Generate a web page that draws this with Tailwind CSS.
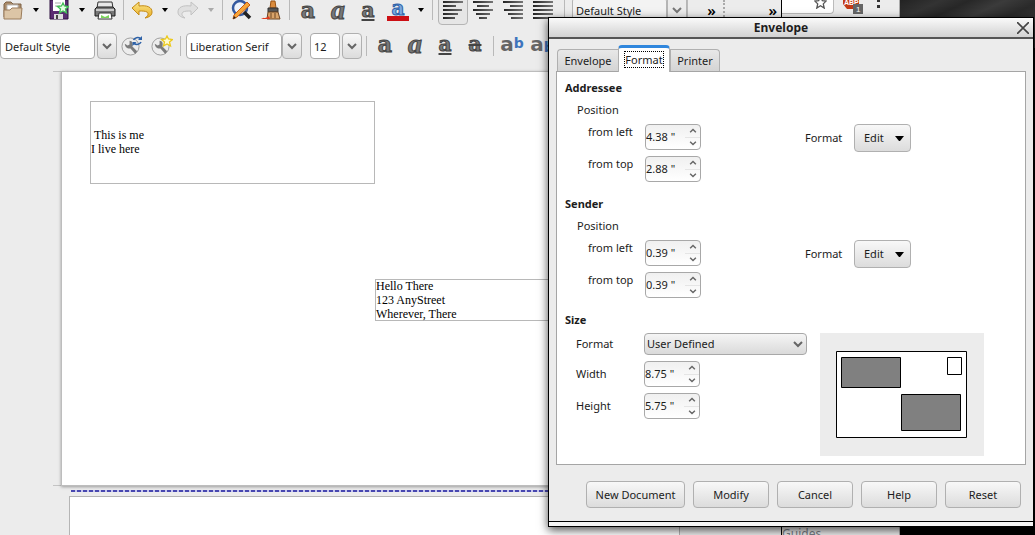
<!DOCTYPE html>
<html lang="en">
<head>
  <meta charset="UTF-8">
  <meta name="viewport" content="width=device-width, initial-scale=1">
  <title>Envelope</title>
  <script src="https://cdn.jsdelivr.net/npm/@tailwindcss/browser@4"></script>
</head>
<body class="relative h-screen overflow-hidden bg-black font-['Noto_Sans',sans-serif] text-[11px] leading-4 text-[#1c1c1c]">
  <!-- Shared symbols -->
  <svg class="absolute h-0 w-0">
    <defs>
      <linearGradient id="bar" x1="0" y1="0" x2="1" y2="0"><stop offset="0" stop-color="#222"/><stop offset="1" stop-color="#777"/></linearGradient>
      <linearGradient id="gold" x1="0" y1="0" x2="0" y2="1"><stop offset="0" stop-color="#fbe88a"/><stop offset="1" stop-color="#e9ac25"/></linearGradient>
    </defs>
    <symbol id="down" viewBox="0 0 6 4"><path d="M0 0h6L3 4z" fill="currentColor"/></symbol>
    <symbol id="chev" viewBox="0 0 10 7"><path d="M1 1l4 4 4-4" fill="none" stroke="currentColor" stroke-width="2"/></symbol>
    <symbol id="wrench" viewBox="0 0 20 20">
      <circle cx="10" cy="10" r="9" fill="#ededed" stroke="#9b9b9b"/>
      <path d="M4 7l3 2 2-1 0-4c3 0 4 3 3 6l5 5-2 3-5-6c-3 1-6-2-6-5z" fill="#7c7c7c"/>
    </symbol>
  </svg>

  <!-- Desktop wallpaper -->
  <div class="absolute top-0 right-0 h-12 w-[136px] bg-[linear-gradient(155deg,#222_0%,#333_18%,#272727_30%,#3b3b3b_45%,#2a2a2a_60%,#353535_75%,#242424_100%)]"></div>

  <!-- Writer window -->
  <main class="absolute inset-y-0 left-0 flex w-[782px] flex-col overflow-hidden border-r border-black bg-[#ececec]">
    <div class="-ml-0.5 flex h-5 shrink-0 items-center">
      <button class="flex w-[30px] shrink-0 justify-center" aria-label="Open">
        <svg class="h-[22px] w-[20px]" viewBox="0 0 20 22"><path d="M1 18V5l2-2h5l2 2h8v6" fill="#a98b6b" stroke="#7e6347"/><path d="M4 6h11v9H4z" fill="#fff" stroke="#bbb"/><path d="M1 20V11h6l2-2h10l-1 11z" fill="#dcc5a6" stroke="#9b7d5c"/></svg>
      </button>
      <span class="flex w-4 shrink-0 justify-center text-black"><svg class="h-1 w-1.5"><use href="#down"/></svg></span>
      <button class="flex w-[30px] shrink-0 justify-center" aria-label="Save">
        <svg class="h-[22px] w-[20px]" viewBox="0 0 20 22"><path d="M1 1h18v19H1z" fill="#5b2d72" stroke="#2e1340"/><path d="M4 1h12v11H4z" fill="#fff"/><path d="M6 4h6M6 7h5" stroke="#aaa"/><path d="M5 15h9v5H5z" fill="#ddd"/><path d="M7 16h2v4H7z" fill="#444"/><path d="M14 4l1.500 3 4 .5-3 2.500 1 4-3.500-2-3.500 2 1-4-3-2.500 4-.5z" fill="#e3ffe3" stroke="#41bd55" stroke-width="1.300"/></svg>
      </button>
      <span class="flex w-4 shrink-0 justify-center text-black"><svg class="h-1 w-1.5"><use href="#down"/></svg></span>
      <button class="flex w-[30px] shrink-0 justify-center" aria-label="Print">
        <svg class="h-[22px] w-[22px]" viewBox="0 0 22 22"><path d="M4 3h14l1 6H3z" fill="#e8e8e8" stroke="#333"/><path d="M1 10l2-2h16l2 2v7H1z" fill="#777" stroke="#1c1c1c"/><path d="M2 10h18v2H2z" fill="#c9c9c9"/><path d="M5 14h12l1 6H4z" fill="#fff" stroke="#333"/><path d="M7 16l4 2 4-2v3H7z" fill="#7bd45a"/></svg>
      </button>
      <span class="flex w-[7px] shrink-0 justify-center"><i class="h-5 w-px bg-[#b9b9b9]"></i></span>
      <button class="flex w-[30px] shrink-0 justify-center" aria-label="Undo">
        <svg class="h-[18px] w-[22px]" viewBox="0 0 22 18"><path d="M1 7l7-6v4c8-1 13 1 13 6 0 3-2 5-7 6 3-2 4-4 2-6-2-1-4-1-8-1v4z" fill="url(#gold)" stroke="#c48a14"/></svg>
      </button>
      <span class="flex w-4 shrink-0 justify-center text-black"><svg class="h-1 w-1.5"><use href="#down"/></svg></span>
      <button class="flex w-[30px] shrink-0 justify-center" aria-label="Redo" disabled>
        <svg class="h-[18px] w-[22px]" viewBox="0 0 22 18"><path d="M21 7l-7-6v4C6 4 1 6 1 11c0 3 2 5 7 6-3-2-4-4-2-6 2-1 4-1 8-1v4z" fill="#e0e0e0" stroke="#c2c2c2"/></svg>
      </button>
      <span class="flex w-4 shrink-0 justify-center text-[#aaa]"><svg class="h-1 w-1.5"><use href="#down"/></svg></span>
      <span class="flex w-[7px] shrink-0 justify-center"><i class="h-5 w-px bg-[#b9b9b9]"></i></span>
      <button class="flex w-[30px] shrink-0 justify-center" aria-label="Find and replace">
        <svg class="h-[22px] w-[22px]" viewBox="0 0 22 22"><circle cx="10" cy="9" r="7" fill="#eef3fb" stroke="#34599f" stroke-width="2.5"/><path d="M14 13l6 6" stroke="#222" stroke-width="3.5"/><path d="M3 20l1-4L17 3l3 3L7 18z" fill="#f6a63a" stroke="#c75b14"/><path d="M3 20l1-3 2 2z" fill="#222"/></svg>
      </button>
      <button class="flex w-[30px] shrink-0 justify-center" aria-label="Clone formatting">
        <svg class="h-[22px] w-[22px]" viewBox="0 0 22 22"><path d="M11 2h4l1 7h-6z" fill="#d98b3d" stroke="#995313"/><path d="M8 9h10v4H8z" fill="#555" stroke="#333"/><path d="M8 13h10l2 7H7z" fill="#d9a46a" stroke="#6b4423"/><path d="M11 14v5M15 14v5" stroke="#6b4423"/><path d="M1 20c3-2 5 0 8-3l1 3z" fill="#e03a1e"/></svg>
      </button>
      <span class="flex w-[7px] shrink-0 justify-center"><i class="h-5 w-px bg-[#b9b9b9]"></i></span>
      <button class="w-[30px] shrink-0 font-['DejaVu_Serif',serif] text-[22px] leading-[18px] font-bold text-[#777] [-webkit-text-stroke:1px_#444]">a</button>
      <button class="w-[30px] shrink-0 font-['Liberation_Serif',serif] text-[28px] leading-[18px] font-bold text-[#777] italic [-webkit-text-stroke:1px_#444]">a</button>
      <button class="w-[30px] shrink-0 font-['DejaVu_Serif',serif] text-[20px] leading-[18px] font-bold text-[#777] underline decoration-[#444] decoration-2 underline-offset-2 [-webkit-text-stroke:1px_#444]">a</button>
      <button class="flex h-[22px] w-[30px] shrink-0 flex-col items-center justify-end" aria-label="Font color">
        <span class="font-['DejaVu_Serif',serif] text-[20px] leading-4 font-bold text-[#79a8e0] [-webkit-text-stroke:1px_#2e62a8]">a</span>
        <i class="h-[5px] w-[22px] bg-[#cc0f14]"></i>
      </button>
      <span class="flex w-4 shrink-0 justify-center text-black"><svg class="h-1 w-1.5"><use href="#down"/></svg></span>
      <span class="mr-0.5 flex w-[7px] shrink-0 justify-center"><i class="h-5 w-px bg-[#b9b9b9]"></i></span>
      <button class="flex h-[30px] w-[30px] shrink-0 items-center justify-center rounded border border-[#b5b5b5] bg-[#e6e6e6]" aria-label="Align left">
        <svg class="h-[18px] w-[20px]" viewBox="0 0 20 18" fill="url(#bar)"><path d="M0 0h20v2H0zM0 4h13v2H0zM0 8h19v2H0zM0 12h15v2H0zM0 16h12v2H0z"/></svg>
      </button>
      <button class="flex w-[30px] shrink-0 justify-center" aria-label="Center">
        <svg class="h-[18px] w-[20px]" viewBox="0 0 20 18" fill="url(#bar)"><path d="M0 0h20v2H0zM4 4h12v2H4zM0 8h20v2H0zM3 12h14v2H3zM6 16h8v2H6z"/></svg>
      </button>
      <button class="flex w-[30px] shrink-0 justify-center" aria-label="Align right">
        <svg class="h-[18px] w-[20px]" viewBox="0 0 20 18" fill="url(#bar)"><path d="M0 0h20v2H0zM7 4h13v2H7zM1 8h19v2H1zM5 12h15v2H5zM8 16h12v2H8z"/></svg>
      </button>
      <button class="flex w-[30px] shrink-0 justify-center" aria-label="Justify">
        <svg class="h-[18px] w-[20px]" viewBox="0 0 20 18" fill="url(#bar)"><path d="M0 0h20v2H0zM0 4h20v2H0zM0 8h20v2H0zM0 12h20v2H0zM0 16h20v2H0z"/></svg>
      </button>
      <span class="flex w-3 shrink-0 justify-center"><i class="h-5 w-px bg-[#b9b9b9]"></i></span>
      <input class="ml-0.5 h-[26px] w-[95px] shrink-0 rounded-sm border border-[#b5b5b5] bg-[#f3f3f3] px-[3px]" value="Default Style" aria-label="Paragraph style">
      <button class="flex h-[26px] w-5 shrink-0 items-center justify-center border border-[#b5b5b5] text-[#777]" aria-label="Open styles"><svg class="h-[7px] w-[10px]"><use href="#chev"/></svg></button>
      <i class="h-5 w-px shrink-0 bg-[#b9b9b9]"></i>
      <span class="flex-1 pl-3 text-center text-[15px] font-semibold text-black">»</span>
      <i class="h-5 shrink-0 border-l-2 border-dotted border-[#aaa]"></i>
      <span class="w-[56px] pr-1 text-right text-[15px] font-semibold text-black">»</span>
    </div>

    <div class="mt-[13px] flex h-[26px] shrink-0 items-center">
      <input class="mr-0.5 h-[26px] w-[95px] shrink-0 rounded-sm border border-[#aaa] bg-white px-1" value="Default Style" aria-label="Style">
      <button class="flex h-[26px] w-5 shrink-0 items-center justify-center rounded-sm border border-[#b0b0b0] bg-linear-to-b from-[#f8f8f8] to-[#dcdcdc] text-[#666]" aria-label="Open style list"><svg class="h-[7px] w-[10px]"><use href="#chev"/></svg></button>
      <button class="flex w-[30px] shrink-0 justify-center" aria-label="Update style">
        <svg class="h-[22px] w-[22px]" viewBox="0 0 22 22"><use href="#wrench" x="0" y="2" width="19" height="19"/><path d="M12.500 5a4.500 4 0 0 1 7-1.500M20 7a4.500 4 0 0 1-7 1.500" fill="none" stroke="#2e62a8" stroke-width="1.6"/><path d="M21 1v4h-4zM11.500 11V7h4z" fill="#2e62a8"/></svg>
      </button>
      <button class="flex w-[30px] shrink-0 justify-center" aria-label="New style">
        <svg class="h-[22px] w-[22px]" viewBox="0 0 22 22"><use href="#wrench" x="0" y="2" width="19" height="19"/><path d="M16 1l1.500 3 4 .5-3 2.500 1 4-3.500-2-3.500 2 1-4-3-2.500 4-.5z" fill="#fffbd0" stroke="#ecc91c" stroke-width="1.3"/></svg>
      </button>
      <span class="mr-0.5 flex w-[7px] shrink-0 justify-center"><i class="h-5 w-px bg-[#b9b9b9]"></i></span>
      <input class="h-[26px] w-[96px] shrink-0 rounded-sm border border-[#aaa] bg-white px-[3px]" value="Liberation Serif" aria-label="Font name">
      <button class="mr-2 flex h-[26px] w-5 shrink-0 items-center justify-center rounded-sm border border-[#b0b0b0] bg-linear-to-b from-[#f8f8f8] to-[#dcdcdc] text-[#666]" aria-label="Open font list"><svg class="h-[7px] w-[10px]"><use href="#chev"/></svg></button>
      <input class="mr-0.5 h-[26px] w-[30px] shrink-0 rounded-sm border border-[#aaa] bg-white px-[3px]" value="12" aria-label="Font size">
      <button class="flex h-[26px] w-5 shrink-0 items-center justify-center rounded-sm border border-[#b0b0b0] bg-linear-to-b from-[#f8f8f8] to-[#dcdcdc] text-[#666]" aria-label="Open size list"><svg class="h-[7px] w-[10px]"><use href="#chev"/></svg></button>
      <span class="flex w-2 shrink-0 justify-center"><i class="h-5 w-px bg-[#b9b9b9]"></i></span>
      <button class="w-[30px] shrink-0 pb-1 font-['DejaVu_Serif',serif] text-[22px] leading-[18px] font-bold text-[#777] [-webkit-text-stroke:1px_#444]">a</button>
      <button class="w-[30px] shrink-0 pb-1 font-['Liberation_Serif',serif] text-[28px] leading-[18px] font-bold text-[#777] italic [-webkit-text-stroke:1px_#444]">a</button>
      <button class="w-[30px] shrink-0 pb-1 font-['DejaVu_Serif',serif] text-[20px] leading-[18px] font-bold text-[#777] underline decoration-[#444] decoration-2 underline-offset-2 [-webkit-text-stroke:1px_#444]">a</button>
      <button class="w-[30px] shrink-0 pb-1 font-['DejaVu_Serif',serif] text-[20px] leading-[18px] font-bold text-[#777] line-through decoration-[#444] decoration-2 [-webkit-text-stroke:1px_#444]">a</button>
      <span class="flex w-[7px] shrink-0 justify-center"><i class="h-5 w-px bg-[#b9b9b9]"></i></span>
      <button class="flex w-[30px] shrink-0 justify-center pb-1 font-['DejaVu_Sans',sans-serif] text-[20px] leading-[18px] font-bold text-[#666]">a<sup class="top-0 self-start text-[14px] leading-4 text-[#3d74bd]">b</sup></button>
      <button class="flex w-[30px] shrink-0 justify-center pb-1 font-['DejaVu_Sans',sans-serif] text-[20px] leading-[18px] font-bold text-[#666]">a<sub class="bottom-0 self-end text-[14px] leading-3 text-[#3d74bd]">b</sub></button>
    </div>

    <!-- Document area -->
    <div class="mt-3 flex flex-1 flex-col font-['Liberation_Serif',serif] text-[12px] leading-[14px] text-black">
      <div class="flex shrink-0">
        <div class="flex w-[61px] flex-col items-end justify-between">
          <i class="h-px w-2 bg-[#c4c4c4]"></i>
          <i class="h-px w-2 bg-[#c4c4c4]"></i>
        </div>
        <section class="h-[415px] flex-1 border border-r-0 border-[#bdbdbd] bg-white pt-[29px] pl-7 shadow-[0_1px_3px_rgba(0,0,0,.35)]">
          <div class="h-[83px] w-[285px] border border-[#b8b8b8] pt-[26px]">
            <p class="pl-[3px]">This is me</p>
            <p>I live here</p>
          </div>
          <div class="mt-[95px] ml-[285px] flex h-[42px] w-[286px] flex-col justify-center border border-[#b8b8b8]">
            <p>Hello There</p>
            <p>123 AnyStreet</p>
            <p>Wherever, There</p>
          </div>
        </section>
      </div>
      <div class="mt-1 ml-[71px] h-0.5 shrink-0 bg-[repeating-linear-gradient(90deg,#4848b0_0_4px,#c6c6ee_4px_6px)]"></div>
      <div class="mt-1 ml-[69px] w-[611px] flex-1 border border-b-0 border-[#b5b5b5] bg-white"></div>
    </div>
  </main>

  <!-- Browser window behind the dialog -->
  <div class="absolute inset-y-0 left-[782px] flex w-[118px] flex-col justify-between overflow-hidden border-r border-[#aaa] bg-[#ececec]">
    <div class="flex h-[14px] items-start">
      <div class="flex h-[14px] w-[52px] justify-end rounded-br-sm border-r border-b border-[#bbb] bg-white pr-1.5">
        <svg class="-mt-1 h-[13px] w-[13px]" viewBox="0 0 14 14"><path d="M7 1l2 4 4 .5-3 3 1 4.5-4-2.500-4 2.500 1-4.500-3-3L5 5z" fill="none" stroke="#555" stroke-width="1.4"/></svg>
      </div>
      <svg class="ml-2 h-[15px] w-[21px]" viewBox="0 0 21 15"><path d="M1 0h16v4l-4 5H5L1 4z" fill="#c33a16"/><text x="2" y="5" font-size="7" font-weight="bold" fill="#fff" font-family="Liberation Sans">ABP</text><path d="M11 4h10v10H11z" fill="#666"/><text x="14" y="12" font-size="8" fill="#fff" font-family="Liberation Sans">1</text></svg>
      <svg class="ml-3.5 h-[9px] w-[3px]" viewBox="0 0 3 9"><path d="M0 0h3v2H0zM0 5h3v3H0z" fill="#333"/></svg>
    </div>
    <div class="h-[9px] text-[12px] text-[#7a7f88]">Guides</div>
  </div>

  <!-- Envelope dialog -->
  <form class="absolute top-[17px] left-[548px] w-[486px] border border-black bg-[#ececec] shadow-[0_3px_9px_rgba(0,0,0,.7)]">
    <header class="relative flex h-[21px] items-center justify-center border-b-2 border-[#555] bg-linear-to-b from-[#fafafa] to-[#d2d2d2]">
      <h1 class="pr-5 text-[12px] font-bold">Envelope</h1>
      <button type="button" class="absolute right-1" aria-label="Close"><svg class="h-3 w-3" viewBox="0 0 12 12"><path d="M0 0l12 12M12 0L0 12" stroke="#444" stroke-width="1.6"/></svg></button>
    </header>

    <nav class="mt-1.5 ml-2 flex items-end">
      <button type="button" class="h-[22px] w-[61px] rounded-tl-sm border border-r-0 border-b-0 border-[#b0b0b0] bg-linear-to-b from-[#e8e8e8] to-[#d4d4d4]">Envelope</button>
      <button type="button" class="relative z-10 -mb-px h-[27px] w-[52px] rounded-t-sm border border-t-3 border-b-0 border-[#b0b0b0] border-t-[#3087dd] bg-white"><span class="border border-dotted border-black">Format</span></button>
      <button type="button" class="h-[22px] w-[50px] rounded-tr-sm border border-b-0 border-[#b0b0b0] bg-linear-to-b from-[#e8e8e8] to-[#d4d4d4]">Printer</button>
    </nav>

    <div class="mr-[7px] ml-[7px] border border-[#a5a5a5] bg-white px-2 pt-2 pb-2">
      <section>
        <h2 class="font-bold">Addressee</h2>
        <h3 class="mt-1.5 pl-3">Position</h3>
        <div class="mt-1.5 flex">
          <div class="flex flex-col gap-1.5">
            <div class="flex">
              <label for="addrLeft" class="w-20 pl-[23px]">from left</label>
              <div class="flex h-[26px] w-[56px] rounded-sm border border-[#a8a8a8] bg-linear-to-b from-[#f0f0f0] to-white">
                <input id="addrLeft" class="w-[39px] min-w-0" value="4.38 &quot;">
                <span class="flex flex-1 flex-col text-[#666]">
                  <button type="button" class="flex flex-1 items-center justify-center border-b border-[#e5e5e5]" aria-label="Increase"><svg class="h-[5px] w-2 rotate-180"><use href="#chev"/></svg></button>
                  <button type="button" class="flex flex-1 items-center justify-center" aria-label="Decrease"><svg class="h-[5px] w-2"><use href="#chev"/></svg></button>
                </span>
              </div>
            </div>
            <div class="flex">
              <label for="addrTop" class="w-20 pl-[23px]">from top</label>
              <div class="flex h-[26px] w-[56px] rounded-sm border border-[#a8a8a8] bg-linear-to-b from-[#f0f0f0] to-white">
                <input id="addrTop" class="w-[39px] min-w-0" value="2.88 &quot;">
                <span class="flex flex-1 flex-col text-[#666]">
                  <button type="button" class="flex flex-1 items-center justify-center border-b border-[#e5e5e5]" aria-label="Increase"><svg class="h-[5px] w-2 rotate-180"><use href="#chev"/></svg></button>
                  <button type="button" class="flex flex-1 items-center justify-center" aria-label="Decrease"><svg class="h-[5px] w-2"><use href="#chev"/></svg></button>
                </span>
              </div>
            </div>
          </div>
          <div class="ml-[104px] flex h-7 items-center">
            <label for="addrEdit" class="w-[49px]">Format</label>
            <button id="addrEdit" type="button" class="flex h-7 w-[57px] items-center justify-between rounded-sm border border-[#b0b0b0] bg-linear-to-b from-[#f8f8f8] to-[#dcdcdc] pr-1.5 pl-[9px]">Edit <svg class="h-[5px] w-[9px] text-black" viewBox="0 0 9 5"><path d="M0 0h9L5 5H4z"/></svg></button>
          </div>
        </div>
      </section>

      <section class="mt-3.5">
        <h2 class="font-bold">Sender</h2>
        <h3 class="mt-1.5 pl-3">Position</h3>
        <div class="mt-1.5 flex">
          <div class="flex flex-col gap-1.5">
            <div class="flex">
              <label for="sendLeft" class="w-20 pl-[23px]">from left</label>
              <div class="flex h-[26px] w-[56px] rounded-sm border border-[#a8a8a8] bg-linear-to-b from-[#f0f0f0] to-white">
                <input id="sendLeft" class="w-[39px] min-w-0" value="0.39 &quot;">
                <span class="flex flex-1 flex-col text-[#666]">
                  <button type="button" class="flex flex-1 items-center justify-center border-b border-[#e5e5e5]" aria-label="Increase"><svg class="h-[5px] w-2 rotate-180"><use href="#chev"/></svg></button>
                  <button type="button" class="flex flex-1 items-center justify-center" aria-label="Decrease"><svg class="h-[5px] w-2"><use href="#chev"/></svg></button>
                </span>
              </div>
            </div>
            <div class="flex">
              <label for="sendTop" class="w-20 pl-[23px]">from top</label>
              <div class="flex h-[26px] w-[56px] rounded-sm border border-[#a8a8a8] bg-linear-to-b from-[#f0f0f0] to-white">
                <input id="sendTop" class="w-[39px] min-w-0" value="0.39 &quot;">
                <span class="flex flex-1 flex-col text-[#666]">
                  <button type="button" class="flex flex-1 items-center justify-center border-b border-[#e5e5e5]" aria-label="Increase"><svg class="h-[5px] w-2 rotate-180"><use href="#chev"/></svg></button>
                  <button type="button" class="flex flex-1 items-center justify-center" aria-label="Decrease"><svg class="h-[5px] w-2"><use href="#chev"/></svg></button>
                </span>
              </div>
            </div>
          </div>
          <div class="ml-[104px] flex h-7 items-center">
            <label for="sendEdit" class="w-[49px]">Format</label>
            <button id="sendEdit" type="button" class="flex h-7 w-[57px] items-center justify-between rounded-sm border border-[#b0b0b0] bg-linear-to-b from-[#f8f8f8] to-[#dcdcdc] pr-1.5 pl-[9px]">Edit <svg class="h-[5px] w-[9px] text-black" viewBox="0 0 9 5"><path d="M0 0h9L5 5H4z"/></svg></button>
          </div>
        </div>
      </section>

      <section class="mt-3.5">
        <h2 class="font-bold">Size</h2>
        <div class="mt-[5px] flex">
          <div class="flex flex-col gap-1.5 pl-[11px]">
            <div class="flex items-center">
              <label for="sizeFormat" class="w-[68px]">Format</label>
              <div class="relative flex items-center">
                <select id="sizeFormat" class="h-[22px] w-[163px] appearance-none rounded-sm border border-[#a8a8a8] bg-linear-to-b from-[#f5f5f5] to-[#dadada] pl-0.5">
                  <option>User Defined</option>
                </select>
                <svg class="pointer-events-none absolute right-1 h-[7px] w-[10px] text-[#666]"><use href="#chev"/></svg>
              </div>
            </div>
            <div class="flex items-center">
              <label for="sizeWidth" class="w-[68px]">Width</label>
              <div class="flex h-[26px] w-[56px] rounded-sm border border-[#a8a8a8] bg-linear-to-b from-[#f0f0f0] to-white">
                <input id="sizeWidth" class="w-[39px] min-w-0" value="8.75 &quot;">
                <span class="flex flex-1 flex-col text-[#666]">
                  <button type="button" class="flex flex-1 items-center justify-center border-b border-[#e5e5e5]" aria-label="Increase"><svg class="h-[5px] w-2 rotate-180"><use href="#chev"/></svg></button>
                  <button type="button" class="flex flex-1 items-center justify-center" aria-label="Decrease"><svg class="h-[5px] w-2"><use href="#chev"/></svg></button>
                </span>
              </div>
            </div>
            <div class="flex items-center">
              <label for="sizeHeight" class="w-[68px]">Height</label>
              <div class="flex h-[26px] w-[56px] rounded-sm border border-[#a8a8a8] bg-linear-to-b from-[#f0f0f0] to-white">
                <input id="sizeHeight" class="w-[39px] min-w-0" value="5.75 &quot;">
                <span class="flex flex-1 flex-col text-[#666]">
                  <button type="button" class="flex flex-1 items-center justify-center border-b border-[#e5e5e5]" aria-label="Increase"><svg class="h-[5px] w-2 rotate-180"><use href="#chev"/></svg></button>
                  <button type="button" class="flex flex-1 items-center justify-center" aria-label="Decrease"><svg class="h-[5px] w-2"><use href="#chev"/></svg></button>
                </span>
              </div>
            </div>
          </div>
          <svg class="ml-[13px] h-[123px] w-[164px] bg-[#ececec]" viewBox="0 0 164 123" stroke="#000" fill="#808080">
            <path d="M16.500 18.500h130v86h-130z" fill="#fff"/>
            <path d="M21.500 24.500h59v30h-59zM81.500 61.500h59v36h-59z"/>
            <path d="M127.500 24.500h14v17h-14z" fill="#fff"/>
          </svg>
        </div>
      </section>
    </div>

    <footer class="mt-4 mr-3 flex justify-end gap-2">
      <button type="button" class="h-[27px] w-[99px] rounded-sm border border-[#b0b0b0] bg-linear-to-b from-[#f8f8f8] to-[#dcdcdc]">New Document</button>
      <button type="button" class="h-[27px] w-[76px] rounded-sm border border-[#b0b0b0] bg-linear-to-b from-[#f8f8f8] to-[#dcdcdc]">Modify</button>
      <button type="button" class="h-[27px] w-[76px] rounded-sm border border-[#b0b0b0] bg-linear-to-b from-[#f8f8f8] to-[#dcdcdc]">Cancel</button>
      <button type="button" class="h-[27px] w-[76px] rounded-sm border border-[#b0b0b0] bg-linear-to-b from-[#f8f8f8] to-[#dcdcdc]">Help</button>
      <button type="button" class="h-[27px] w-[76px] rounded-sm border border-[#b0b0b0] bg-linear-to-b from-[#f8f8f8] to-[#dcdcdc]">Reset</button>
    </footer>
    <div class="mt-[13px] h-[5px] border-t border-black bg-[#f5f5f5]"></div>
  </form>
</body>
</html>
